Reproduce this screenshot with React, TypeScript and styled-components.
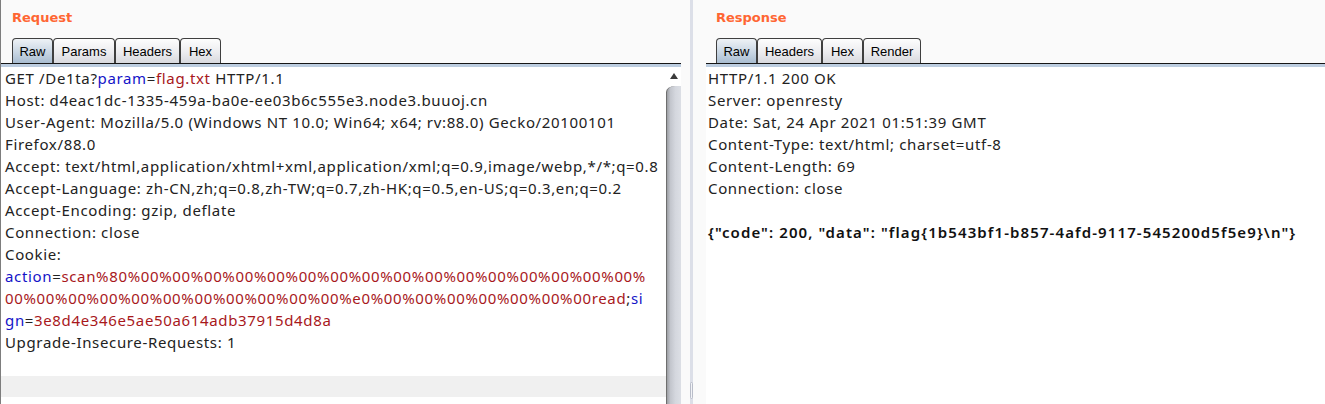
import * as React from 'react'
import styled, { createGlobalStyle } from 'styled-components'

const GlobalStyle = createGlobalStyle`
  html, body {
    margin: 0;
    padding: 0;
    background: #fafafa;
    overflow: hidden;
  }
`

type Tone = 'key' | 'val' | undefined
type Seg = [string, Tone?]

const zeros = (n: number) => '%00'.repeat(n)

const requestLines: Seg[][] = [
  [['GET /De1ta?'], ['param', 'key'], ['='], ['flag.txt', 'val'], [' HTTP/1.1']],
  [['Host: d4eac1dc-1335-459a-ba0e-ee03b6c555e3.node3.buuoj.cn']],
  [['User-Agent: Mozilla/5.0 (Windows NT 10.0; Win64; x64; rv:88.0) Gecko/20100101']],
  [['Firefox/88.0']],
  [['Accept: text/html,application/xhtml+xml,application/xml;q=0.9,image/webp,*/*;q=0.8']],
  [['Accept-Language: zh-CN,zh;q=0.8,zh-TW;q=0.7,zh-HK;q=0.5,en-US;q=0.3,en;q=0.2']],
  [['Accept-Encoding: gzip, deflate']],
  [['Connection: close']],
  [['Cookie:']],
  [['action', 'key'], ['='], ['scan%80' + zeros(16) + '%', 'val']],
  [['00' + zeros(10) + '%e0' + zeros(7) + 'read', 'val'], [';'], ['si', 'key']],
  [['gn', 'key'], ['='], ['3e8d4e346e5ae50a614adb37915d4d8a', 'val']],
  [['Upgrade-Insecure-Requests: 1']],
]

const responseLines: string[] = [
  'HTTP/1.1 200 OK',
  'Server: openresty',
  'Date: Sat, 24 Apr 2021 01:51:39 GMT',
  'Content-Type: text/html; charset=utf-8',
  'Content-Length: 69',
  'Connection: close',
  '',
]

const responseBody = '{"code": 200, "data": "flag{1b543bf1-b857-4afd-9117-545200d5f5e9}\\n"}'

const Page = styled.div`
  display: flex;
  width: 1325px;
  height: 404px;
  background: #fafafa;
`

const Pane = styled.div<{ $left?: boolean }>`
  display: flex;
  flex-direction: column;
  ${p => (p.$left ? 'width: 680px; border-left: 1px solid #7d7d7d;' : 'flex: 1;')}
  min-width: 0;
`

const PaneHeader = styled.div<{ $inset: number }>`
  display: flex;
  flex-direction: column;
  padding: 10px 0 0 ${p => p.$inset}px;
  background: #fafafa;
`

const PaneTitle = styled.div`
  font-family: 'DejaVu Sans', Tahoma, sans-serif;
  font-weight: bold;
  font-size: 13px;
  line-height: 16px;
  color: #ff6633;
`

const TabRow = styled.div`
  display: flex;
  margin-top: 12px;
  height: 25px;
`

const Tab = styled.div<{ $active?: boolean; $w: number }>`
  box-sizing: border-box;
  width: ${p => p.$w}px;
  height: 25px;
  display: flex;
  align-items: center;
  justify-content: center;
  padding-top: 1px;
  border: 1px solid #3f3f3f;
  border-bottom: none;
  border-radius: 4px 4px 0 0;
  background: ${p =>
    p.$active
      ? 'linear-gradient(#eef2f6 0%, #c9d6e3 55%, #a9bdd1 100%)'
      : 'linear-gradient(#fdfdfd 0%, #ececef 55%, #d8d9de 100%)'};
  font-family: 'Liberation Sans', Arial, sans-serif;
  font-size: 13px;
  color: #000;
`

const TabRule = styled.div`
  height: 3px;
  border-top: 1px solid #161616;
  background: #bccde0;
`

const EditorBody = styled.div`
  flex: 1;
  display: flex;
  min-height: 0;
`

const EditorColumn = styled.div`
  flex: 1;
  display: flex;
  flex-direction: column;
  background: #fff;
  min-width: 0;
`

const TextArea = styled.div<{ $pad: number }>`
  flex: 1;
  padding-left: ${p => p.$pad}px;
  background: #fff;
  overflow: hidden;
`

const Line = styled.div<{ $bold?: boolean }>`
  height: 22px;
  line-height: 22px;
  white-space: pre;
  font-family: 'Noto Sans', 'Open Sans', sans-serif;
  font-size: 15px;
  letter-spacing: ${p => (p.$bold ? 1.1 : 0.65)}px;
  font-weight: ${p => (p.$bold ? 600 : 400)};
  color: ${p => (p.$bold ? '#111' : '#222')};
`

const Part = styled.span<{ $tone?: Tone }>`
  color: ${p => (p.$tone === 'key' ? '#1414c8' : p.$tone === 'val' ? '#a8181c' : 'inherit')};
`

const HScroll = styled.div`
  height: 21px;
  margin-bottom: 7px;
  background: #f0f0f0;
`

const VScroll = styled.div`
  width: 15px;
  display: flex;
  flex-direction: column;
  background: #fff;
`

const ScrollButton = styled.div`
  height: 19px;
  display: flex;
  justify-content: center;
  padding-top: 6px;
  box-sizing: border-box;
  background: #fff;

  &::before {
    content: '';
    width: 0;
    height: 0;
    border-left: 4px solid transparent;
    border-right: 4px solid transparent;
    border-bottom: 6px solid #3a3a3a;
  }
`

const ScrollThumb = styled.div`
  flex: 1;
  border-top-left-radius: 9px 6px;
  border-left: 1px solid #6e6e6e;
  background: linear-gradient(to right, #9c9ea3 0%, #c3c6cd 25%, #d4d7de 60%, #dcdfe5 100%);
`

const Splitter = styled.div`
  width: 25px;
  display: flex;
  flex-direction: column;
  align-items: flex-start;
  padding-left: 9px;
  box-sizing: border-box;
  background: #fafafa;
`

const SplitterBar = styled.div`
  flex: 1;
  width: 3px;
  display: flex;
  flex-direction: column;
  justify-content: flex-end;
  background: #dcdfe8;
`

const SplitterGrip = styled.div`
  width: 3px;
  height: 17px;
  margin-bottom: 5px;
  border: 1px solid #b9bdc9;
  border-radius: 2px;
  box-sizing: border-box;
  background: #f2f3f7;
`

const requestTabs = [
  { label: 'Raw', w: 41 },
  { label: 'Params', w: 62 },
  { label: 'Headers', w: 65 },
  { label: 'Hex', w: 41 },
]

const responseTabs = [
  { label: 'Raw', w: 41 },
  { label: 'Headers', w: 65 },
  { label: 'Hex', w: 41 },
  { label: 'Render', w: 58 },
]

const Tabs = ({ tabs }: { tabs: { label: string; w: number }[] }) => (
  <TabRow>
    {tabs.map((t, i) => (
      <Tab key={t.label} $w={t.w} $active={i === 0}>
        {t.label}
      </Tab>
    ))}
  </TabRow>
)

export default function App() {
  return (
    <>
      <GlobalStyle />
      <Page>
        <Pane $left>
          <PaneHeader $inset={11}>
            <PaneTitle>Request</PaneTitle>
            <Tabs tabs={requestTabs} />
          </PaneHeader>
          <TabRule />
          <EditorBody>
            <EditorColumn>
              <TextArea $pad={4}>
                {requestLines.map((segs, i) => (
                  <Line key={i}>
                    {segs.map(([text, tone], j) => (
                      <Part key={j} $tone={tone}>
                        {text}
                      </Part>
                    ))}
                  </Line>
                ))}
              </TextArea>
              <HScroll />
            </EditorColumn>
            <VScroll>
              <ScrollButton />
              <ScrollThumb />
            </VScroll>
          </EditorBody>
        </Pane>
        <Splitter>
          <SplitterBar>
            <SplitterGrip />
          </SplitterBar>
        </Splitter>
        <Pane>
          <PaneHeader $inset={10}>
            <PaneTitle>Response</PaneTitle>
            <Tabs tabs={responseTabs} />
          </PaneHeader>
          <TabRule />
          <EditorBody>
            <EditorColumn>
              <TextArea $pad={2}>
                {responseLines.map((text, i) => (
                  <Line key={i}>{text}</Line>
                ))}
                <Line $bold>{responseBody}</Line>
              </TextArea>
            </EditorColumn>
          </EditorBody>
        </Pane>
      </Page>
    </>
  )
}
